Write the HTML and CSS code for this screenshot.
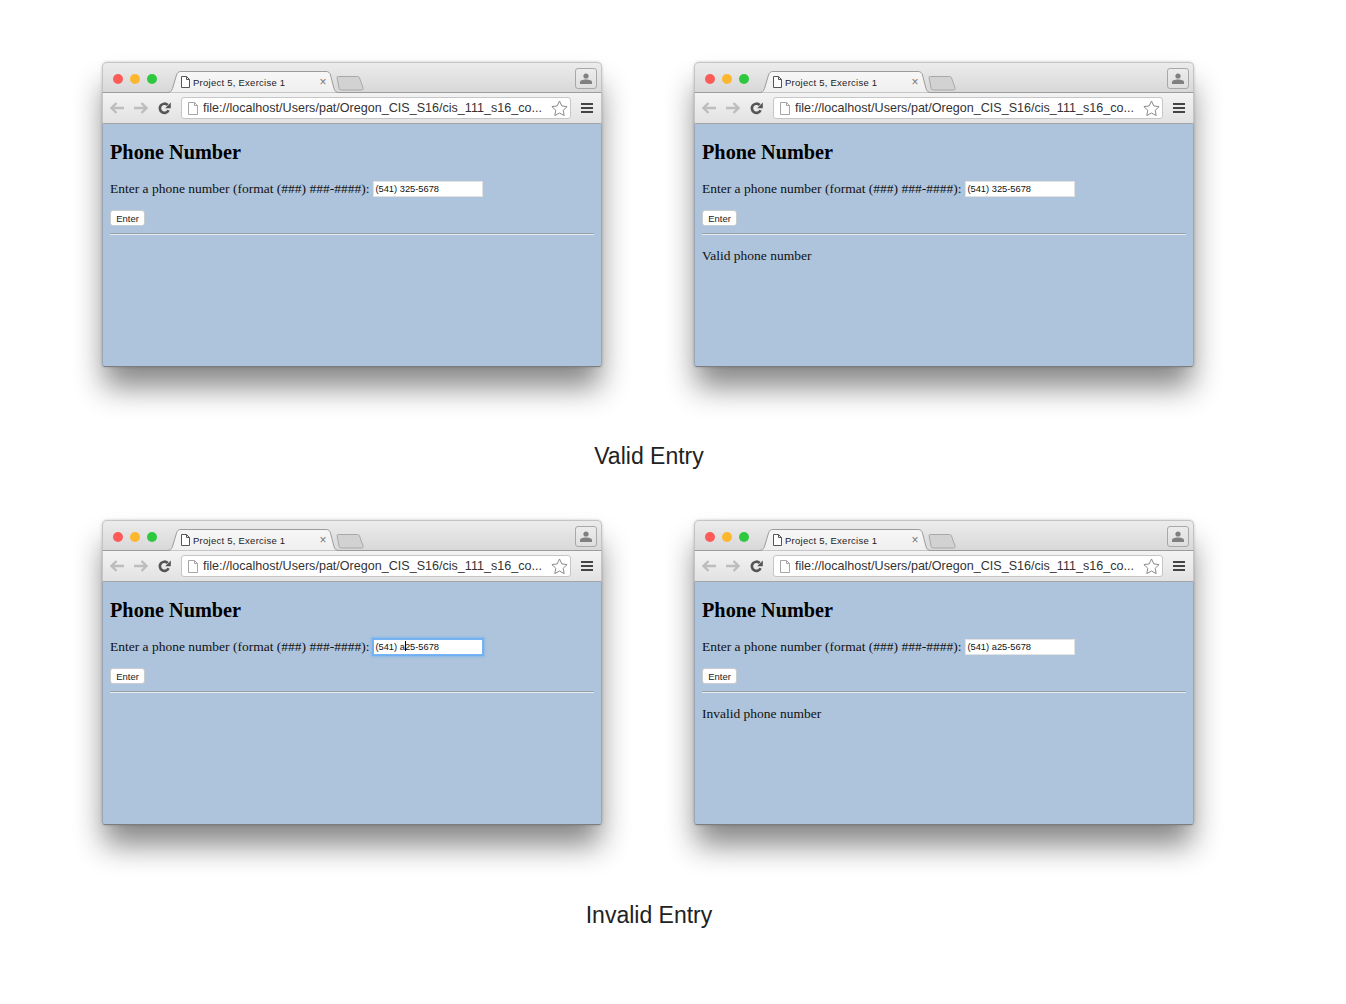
FILE: index.html
```html
<!DOCTYPE html>
<html lang="en">
<head>
    <meta charset="UTF-8">
    <title>Project 5, Exercise 1</title>
    <link rel="stylesheet" href="styles.css">
</head>
<body>

<!-- shared icons -->
<svg class="icon-defs" width="0" height="0">
    <defs>
        <linearGradient id="tab-fill" x1="0" y1="0" x2="0" y2="1">
            <stop offset="0" stop-color="#f7f7f7"/>
            <stop offset="1" stop-color="#efefef"/>
        </linearGradient>
    </defs>
    <symbol id="i-tab" viewBox="0 0 172 22">
        <path d="M0 21.500c3 0 4.500-1 5.500-4L9.500 4C10.300 1.700 11.500.5 14 .5h145c2.500 0 3.700 1.200 4.500 3.500l3.500 13.500c1 3 2 4 5 4" fill="url(#tab-fill)" stroke="#9c9c9c"/>
    </symbol>
    <symbol id="i-newtab" viewBox="0 0 28 15">
        <path d="M1 1.500C1 .8 1.500.5 2.200.5h19.300c1 0 1.700.5 2 1.300l3.500 10c.5 1.200 0 2.200-1.200 2.200H5c-1 0-1.500-.5-1.800-1.300z" fill="#d2d2d2" stroke="#a8a8a8"/>
    </symbol>
    <symbol id="i-doc" viewBox="0 0 9 12">
        <path d="M.5.500h5l3 3v8h-8zM5.500.5v3h3" fill="#fff" stroke="#555"/>
    </symbol>
    <symbol id="i-docurl" viewBox="0 0 10 13">
        <path d="M.5.500h6l3 3v9h-9zM6.500.5v3h3" fill="#fff" stroke="#a5a5a5"/>
    </symbol>
    <symbol id="i-back" viewBox="0 0 14 12">
        <path d="M6.500 1 1.500 6l5 5M2 6h12" fill="none" stroke="#bdbdbd" stroke-width="2.400"/>
    </symbol>
    <symbol id="i-forward" viewBox="0 0 14 12">
        <path d="M7.500 1l5 5-5 5M12 6H0" fill="none" stroke="#bdbdbd" stroke-width="2.400"/>
    </symbol>
    <symbol id="i-reload" viewBox="0 0 13 13">
        <path d="M10.600 8.300A4.600 4.600 0 1 1 9.700 3" fill="none" stroke="#555" stroke-width="2.600"/>
        <path d="M12.800.6v5.600H7.200z" fill="#555"/>
    </symbol>
    <symbol id="i-star" viewBox="0 0 17 16">
        <path d="M8.500 1l2.300 4.900 5.300.7-3.900 3.700 1 5.300-4.700-2.600-4.700 2.600 1-5.300L.9 6.600l5.300-.7z" fill="#fff" stroke="#8a8a8a"/>
    </symbol>
    <symbol id="i-person" viewBox="0 0 12 11">
        <circle cx="6" cy="3" r="2.600" fill="#808080"/>
        <path d="M0 11V9.200C0 7.500 2.500 6.500 6 6.500s6 1 6 2.700V11z" fill="#808080"/>
    </symbol>
</svg>

<main class="page">

    <div class="shots">
        <div class="window">
            <div class="tabstrip">
                <div class="lights"><span class="light red"></span><span class="light yellow"></span><span class="light green"></span></div>
                <div class="tab">
                    <svg class="tab-shape"><use href="#i-tab"/></svg>
                    <svg class="tab-doc"><use href="#i-doc"/></svg>
                    <span class="tab-title">Project 5, Exercise 1</span>
                    <span class="tab-close">×</span>
                </div>
                <svg class="newtab"><use href="#i-newtab"/></svg>
                <div class="person"><svg class="person-icon"><use href="#i-person"/></svg></div>
            </div>
            <div class="toolbar">
                <svg class="nav-icon"><use href="#i-back"/></svg>
                <svg class="nav-icon"><use href="#i-forward"/></svg>
                <svg class="reload"><use href="#i-reload"/></svg>
                <div class="urlbar">
                    <svg class="url-doc"><use href="#i-docurl"/></svg>
                    <span class="url-text">file://localhost/Users/pat/Oregon_CIS_S16/cis_111_s16_co...</span>
                    <svg class="star"><use href="#i-star"/></svg>
                </div>
                <div class="menu"><span></span><span></span><span></span></div>
            </div>
            <div class="content">
                <h1>Phone Number</h1>
                <div class="entry">Enter a phone number (format (###) ###-####): <div class="field">(541) 325-5678</div></div>
                <button class="enter-btn">Enter</button>
                <hr>
            </div>
        </div>

        <div class="window">
            <div class="tabstrip">
                <div class="lights"><span class="light red"></span><span class="light yellow"></span><span class="light green"></span></div>
                <div class="tab">
                    <svg class="tab-shape"><use href="#i-tab"/></svg>
                    <svg class="tab-doc"><use href="#i-doc"/></svg>
                    <span class="tab-title">Project 5, Exercise 1</span>
                    <span class="tab-close">×</span>
                </div>
                <svg class="newtab"><use href="#i-newtab"/></svg>
                <div class="person"><svg class="person-icon"><use href="#i-person"/></svg></div>
            </div>
            <div class="toolbar">
                <svg class="nav-icon"><use href="#i-back"/></svg>
                <svg class="nav-icon"><use href="#i-forward"/></svg>
                <svg class="reload"><use href="#i-reload"/></svg>
                <div class="urlbar">
                    <svg class="url-doc"><use href="#i-docurl"/></svg>
                    <span class="url-text">file://localhost/Users/pat/Oregon_CIS_S16/cis_111_s16_co...</span>
                    <svg class="star"><use href="#i-star"/></svg>
                </div>
                <div class="menu"><span></span><span></span><span></span></div>
            </div>
            <div class="content">
                <h1>Phone Number</h1>
                <div class="entry">Enter a phone number (format (###) ###-####): <div class="field">(541) 325-5678</div></div>
                <button class="enter-btn">Enter</button>
                <hr>
                <p class="result">Valid phone number</p>
            </div>
        </div>
    </div>

    <p class="caption">Valid Entry</p>

    <div class="shots">
        <div class="window">
            <div class="tabstrip">
                <div class="lights"><span class="light red"></span><span class="light yellow"></span><span class="light green"></span></div>
                <div class="tab">
                    <svg class="tab-shape"><use href="#i-tab"/></svg>
                    <svg class="tab-doc"><use href="#i-doc"/></svg>
                    <span class="tab-title">Project 5, Exercise 1</span>
                    <span class="tab-close">×</span>
                </div>
                <svg class="newtab"><use href="#i-newtab"/></svg>
                <div class="person"><svg class="person-icon"><use href="#i-person"/></svg></div>
            </div>
            <div class="toolbar">
                <svg class="nav-icon"><use href="#i-back"/></svg>
                <svg class="nav-icon"><use href="#i-forward"/></svg>
                <svg class="reload"><use href="#i-reload"/></svg>
                <div class="urlbar">
                    <svg class="url-doc"><use href="#i-docurl"/></svg>
                    <span class="url-text">file://localhost/Users/pat/Oregon_CIS_S16/cis_111_s16_co...</span>
                    <svg class="star"><use href="#i-star"/></svg>
                </div>
                <div class="menu"><span></span><span></span><span></span></div>
            </div>
            <div class="content">
                <h1>Phone Number</h1>
                <div class="entry">Enter a phone number (format (###) ###-####): <div class="field focused">(541) a<span class="caret"></span>25-5678</div></div>
                <button class="enter-btn">Enter</button>
                <hr>
            </div>
        </div>

        <div class="window">
            <div class="tabstrip">
                <div class="lights"><span class="light red"></span><span class="light yellow"></span><span class="light green"></span></div>
                <div class="tab">
                    <svg class="tab-shape"><use href="#i-tab"/></svg>
                    <svg class="tab-doc"><use href="#i-doc"/></svg>
                    <span class="tab-title">Project 5, Exercise 1</span>
                    <span class="tab-close">×</span>
                </div>
                <svg class="newtab"><use href="#i-newtab"/></svg>
                <div class="person"><svg class="person-icon"><use href="#i-person"/></svg></div>
            </div>
            <div class="toolbar">
                <svg class="nav-icon"><use href="#i-back"/></svg>
                <svg class="nav-icon"><use href="#i-forward"/></svg>
                <svg class="reload"><use href="#i-reload"/></svg>
                <div class="urlbar">
                    <svg class="url-doc"><use href="#i-docurl"/></svg>
                    <span class="url-text">file://localhost/Users/pat/Oregon_CIS_S16/cis_111_s16_co...</span>
                    <svg class="star"><use href="#i-star"/></svg>
                </div>
                <div class="menu"><span></span><span></span><span></span></div>
            </div>
            <div class="content">
                <h1>Phone Number</h1>
                <div class="entry">Enter a phone number (format (###) ###-####): <div class="field">(541) a25-5678</div></div>
                <button class="enter-btn">Enter</button>
                <hr>
                <p class="result">Invalid phone number</p>
            </div>
        </div>
    </div>

    <p class="caption caption-last">Invalid Entry</p>

</main>

</body>
</html>
```

FILE: styles.css
```css
body {
    margin: 0;
    background-color: #fff;
    font-family: "Liberation Sans", Arial, sans-serif;
}

.icon-defs {
    position: absolute;
}

.page {
    width: 1092px;
    padding: 62px 0 0 102px;
}

.shots {
    display: grid;
    grid-template-columns: 500px 500px;
    column-gap: 92px;
}

.caption {
    height: 153px;
    margin: 0;
    padding-top: 76px;
    box-sizing: border-box;
    text-align: center;
    font-size: 23px;
    line-height: 26px;
    color: #222;
    transform: translateX(1px);
}

.caption-last {
    padding-top: 77px;
}

/* browser window */
.window {
    height: 305px;
    display: flex;
    flex-direction: column;
    border-radius: 5px 5px 3px 3px;
    box-shadow: 0 0 3px rgba(0, 0, 0, 0.2), 0 22px 30px -2px rgba(0, 0, 0, 0.48);
}

.tabstrip {
    height: 31px;
    flex-shrink: 0;
    display: flex;
    align-items: flex-start;
    box-sizing: border-box;
    padding-left: 11px;
    background: linear-gradient(#ececec, #d8d8d8);
    border: 1px solid #c4c4c4;
    border-bottom-color: #9c9c9c;
    border-radius: 5px 5px 0 0;
}

.lights {
    display: flex;
    gap: 7px;
    padding-top: 11px;
    margin-left: -1px;
}

.light {
    width: 10px;
    height: 10px;
    border-radius: 50%;
}

.red { background-color: #fc5b57; }
.yellow { background-color: #fdb72e; }
.green { background-color: #2ec83f; }

.tab {
    position: relative;
    width: 172px;
    height: 22px;
    margin: 8px 0 0 10px;
    display: flex;
    align-items: center;
    font-size: 9.500px;
    letter-spacing: 0.25px;
    color: #222;
}

.tab-shape {
    position: absolute;
    left: 0;
    top: 0;
    width: 172px;
    height: 22px;
}

.tab-doc {
    position: relative;
    width: 9px;
    height: 12px;
    margin-left: 14px;
}

.tab-title {
    position: relative;
    margin-left: 3px;
    white-space: nowrap;
}

.tab-close {
    position: relative;
    margin-left: 34px;
    font-size: 12px;
    color: #777;
}

.newtab {
    width: 28px;
    height: 15px;
    margin: 13px 0 0 -3px;
}

.person {
    width: 22px;
    height: 21px;
    margin: 5px 4px 0 auto;
    box-sizing: border-box;
    display: flex;
    align-items: center;
    justify-content: center;
    border: 1px solid #a8a8a8;
    border-radius: 3px;
    background: linear-gradient(#ececec, #dedede);
}

.person-icon {
    width: 12px;
    height: 11px;
}

.toolbar {
    height: 31px;
    flex-shrink: 0;
    display: flex;
    align-items: center;
    box-sizing: border-box;
    padding: 0 8px 0 7px;
    background: linear-gradient(#f3f3f3, #e2e2e2);
    border: 1px solid #c4c4c4;
    border-width: 0 1px;
    border-bottom: 1px solid #a5a5a5;
}

.nav-icon {
    width: 14px;
    height: 12px;
    margin-right: 10px;
}

.reload {
    width: 13px;
    height: 13px;
    margin-right: 10px;
}

.urlbar {
    width: 390px;
    height: 22px;
    display: flex;
    align-items: center;
    box-sizing: border-box;
    border: 1px solid #c6c6c6;
    border-radius: 3px;
    background-color: #fff;
}

.url-doc {
    width: 10px;
    height: 13px;
    margin-left: 6px;
}

.url-text {
    margin-left: 5px;
    font-size: 12.570px;
    color: #333;
    white-space: nowrap;
}

.star {
    width: 17px;
    height: 16px;
    margin-left: auto;
    margin-right: 2px;
}

.menu {
    display: flex;
    flex-direction: column;
    gap: 2px;
    margin-left: 10px;
}

.menu span {
    width: 12px;
    height: 2px;
    background-color: #444;
}

/* page inside the window */
.content {
    flex: 1;
    padding: 0 7px;
    background-color: #aec4dc;
    border: 1px solid #9aa6b4;
    border-width: 0 1px;
    border-bottom: 1px solid #7d7d7d;
    border-radius: 0 0 3px 3px;
    font-family: "Liberation Serif", "Times New Roman", serif;
    color: #111;
}

h1 {
    margin: 16px 0 0;
    font-size: 20.250px;
    line-height: 24px;
    color: #000;
}

.entry {
    display: flex;
    align-items: center;
    gap: 4px;
    margin-top: 17px;
    font-size: 13.500px;
    line-height: 16px;
}

.field {
    width: 110px;
    height: 16px;
    box-sizing: border-box;
    padding-left: 1px;
    background-color: #fff;
    border: 1px solid #e2e2e2;
    font-family: "Liberation Sans", Arial, sans-serif;
    font-size: 9.300px;
    line-height: 14px;
    color: #111;
}

.focused {
    border-color: #79b4f2;
    box-shadow: 0 0 0 1px #6fb0f2, 0 0 2px 2px rgba(111, 176, 242, 0.6);
}

.caret {
    display: inline-block;
    height: 10px;
    border-left: 1px solid #000;
    margin-right: -1px;
    vertical-align: -1px;
}

.enter-btn {
    display: block;
    width: 35px;
    height: 16px;
    margin-top: 13px;
    padding: 0;
    background-color: #fff;
    border: 1px solid #c9ccd0;
    border-radius: 3px;
    font-family: "Liberation Sans", Arial, sans-serif;
    font-size: 9.500px;
    color: #222;
}

hr {
    height: 2px;
    margin: 7px 0 0;
    box-sizing: border-box;
    border: 0;
    border-top: 1px solid #98a0aa;
    border-bottom: 1px solid #e6ecf3;
}

.result {
    margin: 13px 0 0;
    font-size: 13.500px;
    line-height: 16px;
}
```
